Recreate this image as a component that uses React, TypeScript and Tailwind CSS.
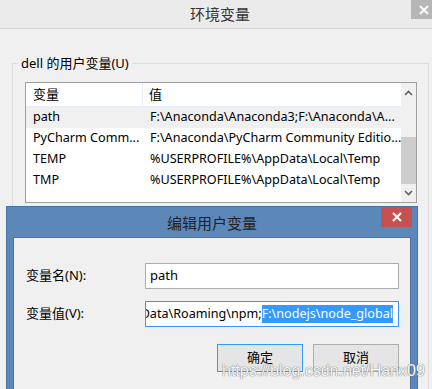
import React from 'react';

const rows = [
  { name: 'path', value: 'F:\\Anaconda\\Anaconda3;F:\\Anaconda\\A...', selected: true },
  { name: 'PyCharm Comm...', value: 'F:\\Anaconda\\PyCharm Community Editio...' },
  { name: 'TEMP', value: '%USERPROFILE%\\AppData\\Local\\Temp' },
  { name: 'TMP', value: '%USERPROFILE%\\AppData\\Local\\Temp' },
];

const font = { fontFamily: '"Noto Sans", "Noto Sans CJK SC", sans-serif' };

function CloseX({ className }: { className?: string }) {
  return (
    <svg width="10" height="10" viewBox="0 0 10 10" className={className}>
      <path d="M1 1 L9 9 M9 1 L1 9" stroke="#fff" strokeWidth="2" />
    </svg>
  );
}

export default function App() {
  return (
    <div
      className="relative w-[432px] h-[389px] overflow-hidden bg-[#f0f0f0] text-[12.6px] text-black"
      style={font}
    >
      {/* Main window title bar */}
      <div className="relative h-[29px] bg-[#ebebeb] border-b border-[#d7d7d7] flex items-center justify-center">
        <span className="text-[15px] text-[#333] pl-[8px]">环境变量</span>
        <div className="absolute right-0 top-0 w-[21px] h-[19px] bg-[#b6b6b6] flex items-center justify-end pr-[3px]">
          <CloseX />
        </div>
      </div>

      {/* Group box */}
      <div className="relative ml-[12px] mt-[34px] w-[417px] h-[400px] border border-[#dcdcdc]">
        <span className="absolute -top-[11px] left-[5px] px-[3px] bg-[#f0f0f0] leading-[20px] text-[13px]">dell 的用户变量(U)</span>

        {/* List view */}
        <div className="ml-[12px] mt-[18px] w-[392px] h-[121px] border border-[#a0a0a0] bg-white flex">
          <div className="flex-1 flex flex-col">
            <div className="h-[24px] flex border-b border-[#e6eef8]">
              <div className="w-[117px] border-r border-[#e6eef8] pl-[7px] flex items-center text-[13px]">变量</div>
              <div className="flex-1 pl-[6px] flex items-center text-[13px]">值</div>
            </div>
            {rows.map((r) => (
              <div
                key={r.name}
                className={`h-[21px] flex items-center whitespace-nowrap ${r.selected ? 'bg-[#f0f0f0]' : ''}`}
              >
                <div className="w-[117px] pl-[7px] overflow-hidden">{r.name}</div>
                <div className="flex-1 pl-[7px] overflow-hidden">{r.value}</div>
              </div>
            ))}
          </div>
          {/* Scrollbar */}
          <div className="w-[17px] bg-[#f0f0f0] flex flex-col items-center">
            <div className="h-[20px] flex items-center justify-center">
              <svg width="9" height="6" viewBox="0 0 9 6">
                <path d="M1 5 L4.5 1.5 L8 5" stroke="#606060" strokeWidth="1.6" fill="none" />
              </svg>
            </div>
            <div className="mt-[34px] w-[15px] h-[48px] bg-[#cdcdcd]" />
            <div className="flex-1" />
            <div className="h-[18px] flex items-center justify-center">
              <svg width="9" height="6" viewBox="0 0 9 6">
                <path d="M1 1 L4.5 4.5 L8 1" stroke="#606060" strokeWidth="1.6" fill="none" />
              </svg>
            </div>
          </div>
        </div>
      </div>

      {/* Edit dialog window */}
      <div className="absolute left-[6px] top-[206px] w-[412px] h-[200px] bg-[#5c87b9] border border-[#4b73a3]">
        <div className="h-[30px] flex items-center justify-center">
          <span className="text-[15px] text-[#222] pt-[2px]">编辑用户变量</span>
        </div>
        <div className="absolute right-[5px] top-0 w-[31px] h-[20px] bg-[#c75050] flex items-center justify-center">
          <CloseX />
        </div>
        <div className="mx-[6px] h-[170px] bg-[#f0f0f0] border border-[#4b73a3] pl-[12px] pt-[25px]">
          <div className="flex items-center h-[26px]">
            <div className="w-[119px] text-[13px]">变量名(N):</div>
            <div className="w-[254px] h-[26px] border border-[#abadb3] bg-white flex items-center pl-[4px] text-[13px]">path</div>
          </div>
          <div className="flex items-center h-[26px] mt-[12px]">
            <div className="w-[119px] text-[13px]">变量值(V):</div>
            <div className="w-[254px] h-[26px] border border-[#3399ff] bg-white flex items-center justify-end pr-[5px] overflow-hidden whitespace-nowrap">
              <span>%USERPROFILE%\AppData\Roaming\npm;</span>
              <span className="bg-[#3399ff] text-white leading-[18px]">F:\nodejs\node_global</span>
              <span className="w-[1px] h-[16px] bg-[#b06000]" />
            </div>
          </div>
          <div className="flex justify-end gap-[10px] mt-[17px] pr-[11px]">
            <div className="w-[86px] h-[28px] border border-[#3399ff] bg-[#e5e5e5] flex items-center justify-center text-[13px]">确定</div>
            <div className="w-[86px] h-[28px] border border-[#adadad] bg-[#e5e5e5] flex items-center justify-center text-[13px]">取消</div>
          </div>
        </div>
      </div>

      {/* Watermark */}
      <div
        className="absolute left-[222px] top-[359px] text-[16px] text-[#f6f6f6] [text-shadow:0_0_1px_#7a7a7a,0_0_1px_#7a7a7a] whitespace-nowrap"
        style={{ fontFamily: '"Liberation Sans", Arial, sans-serif' }}
      >
        https://blog.csdn.net/Hanx09
      </div>
    </div>
  );
}
